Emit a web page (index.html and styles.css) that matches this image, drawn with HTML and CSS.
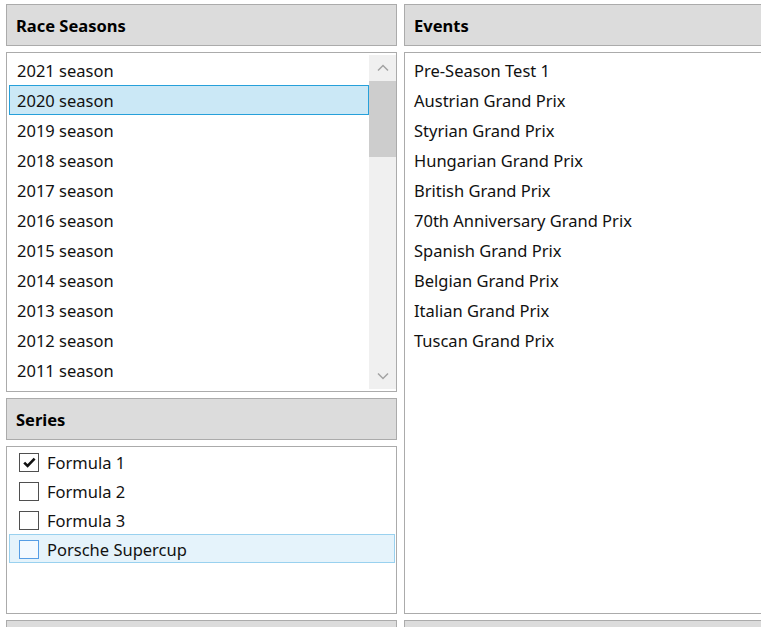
FILE: index.html
```html
<!DOCTYPE html>
<html>
<head>
<meta charset="utf-8">
<link rel="stylesheet" href="styles.css">
</head>
<body>
<div class="app">
  <div class="col left">
    <div class="header">Race Seasons</div>
    <div class="box seasons">
      <div class="items">
        <div class="item">2021 season</div>
        <div class="item selected">2020 season</div>
        <div class="item">2019 season</div>
        <div class="item">2018 season</div>
        <div class="item">2017 season</div>
        <div class="item">2016 season</div>
        <div class="item">2015 season</div>
        <div class="item">2014 season</div>
        <div class="item">2013 season</div>
        <div class="item">2012 season</div>
        <div class="item">2011 season</div>
      </div>
      <div class="scrollbar">
        <div class="arrow">
          <svg width="12" height="8" viewBox="0 0 12 8"><path d="M1 6.5 L6 1.5 L11 6.5" fill="none" stroke="#a3a3a3" stroke-width="1.5"/></svg>
        </div>
        <div class="track"><div class="thumb"></div></div>
        <div class="arrow">
          <svg width="12" height="8" viewBox="0 0 12 8"><path d="M1 1.5 L6 6.5 L11 1.5" fill="none" stroke="#a3a3a3" stroke-width="1.5"/></svg>
        </div>
      </div>
    </div>
    <div class="header">Series</div>
    <div class="box series">
      <div class="check-item">
        <span class="check checked"><svg width="17" height="17" viewBox="0 0 17 17"><path d="M3.2 8.6 L6.6 12 L13.6 4.6" fill="none" stroke="#111" stroke-width="2.6"/></svg></span>
        <span>Formula 1</span>
      </div>
      <div class="check-item">
        <span class="check"></span>
        <span>Formula 2</span>
      </div>
      <div class="check-item">
        <span class="check"></span>
        <span>Formula 3</span>
      </div>
      <div class="check-item hover">
        <span class="check"></span>
        <span>Porsche Supercup</span>
      </div>
    </div>
    <div class="header stub"></div>
  </div>
  <div class="col right">
    <div class="header">Events</div>
    <div class="box events">
      <div class="item">Pre-Season Test 1</div>
      <div class="item">Austrian Grand Prix</div>
      <div class="item">Styrian Grand Prix</div>
      <div class="item">Hungarian Grand Prix</div>
      <div class="item">British Grand Prix</div>
      <div class="item">70th Anniversary Grand Prix</div>
      <div class="item">Spanish Grand Prix</div>
      <div class="item">Belgian Grand Prix</div>
      <div class="item">Italian Grand Prix</div>
      <div class="item">Tuscan Grand Prix</div>
    </div>
    <div class="header stub"></div>
  </div>
</div>
</body>
</html>
```

FILE: styles.css
```css
html, body {
  margin: 0;
  padding: 0;
  background: #ffffff;
  overflow: hidden;
  height: 627px;
}
body {
  font-family: "Noto Sans", "Open Sans", sans-serif;
  font-size: 16.5px;
  color: #111111;
}
.app {
  display: flex;
  gap: 7px;
  padding: 4px 0 0 6px;
  width: 755px;
  height: 623px;
  overflow: hidden;
}
.col {
  display: flex;
  flex-direction: column;
  gap: 6px;
  flex: none;
}
.left { width: 391px; }
.right { width: 420px; }
.header {
  box-sizing: border-box;
  height: 42px;
  background: #dcdcdc;
  border: 1px solid #ababab;
  font-weight: bold;
  display: flex;
  align-items: center;
  padding: 1px 0 0 9px;
  flex: none;
  color: #000;
}
.box {
  box-sizing: border-box;
  border: 1px solid #ababab;
  background: #fff;
  overflow: hidden;
  flex: none;
}
.seasons {
  height: 340px;
  display: flex;
  padding: 2px 0 2px 2px;
}
.items {
  width: 360px;
  flex: none;
  overflow: hidden;
}
.item {
  box-sizing: border-box;
  height: 30px;
  line-height: 27px;
  padding: 1px 0 0 7px;
  border: 1px solid transparent;
  white-space: nowrap;
}
.item.selected {
  background: #cbe8f6;
  border-color: #26a0da;
}
.scrollbar {
  width: 27px;
  flex: none;
  background: #f0f0f0;
  display: flex;
  flex-direction: column;
}
.arrow {
  height: 26px;
  display: flex;
  align-items: center;
  justify-content: center;
  flex: none;
}
.track {
  flex: 1;
}
.thumb {
  height: 76px;
  background: #cdcdcd;
}
.series {
  height: 168px;
  padding: 0 1px 2px 2px;
}
.check-item {
  box-sizing: border-box;
  height: 29px;
  display: flex;
  align-items: center;
  gap: 8px;
  padding: 1px 0 0 9px;
  border: 1px solid transparent;
}
.check-item.hover {
  background: #e5f3fb;
  border-color: #99d1ef;
}
.check {
  box-sizing: border-box;
  width: 20px;
  height: 19px;
  border: 1.5px solid #4f4f4f;
  background: #fff;
  display: flex;
  align-items: center;
  justify-content: center;
  flex: none;
}
.hover .check {
  border-color: #569de5;
  background: #f3f9ff;
}
.events {
  height: 562px;
  padding: 2px 0 2px 1px;
}
```
